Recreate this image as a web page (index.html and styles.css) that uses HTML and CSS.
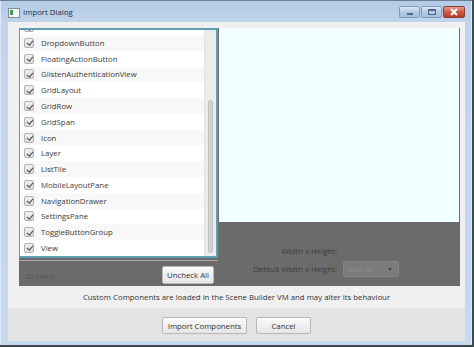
FILE: index.html
```html
<!DOCTYPE html>
<html>
<head>
<meta charset="utf-8">
<link rel="stylesheet" href="styles.css">
</head>
<body>
<div class="window">
  <div class="titlebar">
    <div class="app-icon"><span class="app-icon-green"></span></div>
    <div class="title">Import Dialog</div>
    <div class="caption-buttons">
      <div class="cap cap-min"><span class="min-glyph"></span></div>
      <div class="cap cap-max"><span class="max-glyph"></span></div>
      <div class="cap cap-close">
        <svg width="10" height="8" viewBox="0 0 10 8"><path d="M2 1 L8 7 M8 1 L2 7" stroke="#fff" stroke-width="2" fill="none"/></svg>
      </div>
    </div>
  </div>
  <div class="client">
    <div class="main">
      <div class="stage">
        <div class="left-col">
          <div class="list">
            <div class="rows">
              <div class="row"><span class="cb"></span><span class="label">DatePicker</span></div>
              <div class="row alt"><span class="cb"></span><span class="label">DropdownButton</span></div>
              <div class="row"><span class="cb"></span><span class="label">FloatingActionButton</span></div>
              <div class="row alt"><span class="cb"></span><span class="label">GlistenAuthenticationView</span></div>
              <div class="row"><span class="cb"></span><span class="label">GridLayout</span></div>
              <div class="row alt"><span class="cb"></span><span class="label">GridRow</span></div>
              <div class="row"><span class="cb"></span><span class="label">GridSpan</span></div>
              <div class="row alt"><span class="cb"></span><span class="label">Icon</span></div>
              <div class="row"><span class="cb"></span><span class="label">Layer</span></div>
              <div class="row alt"><span class="cb"></span><span class="label">ListTile</span></div>
              <div class="row"><span class="cb"></span><span class="label">MobileLayoutPane</span></div>
              <div class="row alt"><span class="cb"></span><span class="label">NavigationDrawer</span></div>
              <div class="row"><span class="cb"></span><span class="label">SettingsPane</span></div>
              <div class="row alt"><span class="cb"></span><span class="label">ToggleButtonGroup</span></div>
              <div class="row"><span class="cb"></span><span class="label">View</span></div>
            </div>
            <div class="scrollbar"><div class="thumb"></div></div>
          </div>
          <div class="list-footer">
            <span class="count">20 items</span>
            <span class="btn btn-uncheck">Uncheck All</span>
          </div>
        </div>
        <div class="right-col">
          <div class="preview"></div>
          <div class="props">
            <span class="prop-label">Width x Height:</span><span></span>
            <span class="prop-label">Default Width x Height:</span>
            <span class="combo"><span>Built-in</span><span class="arrow"></span></span>
          </div>
        </div>
      </div>
    </div>
    <div class="message">Custom Components are loaded in the Scene Builder VM and may alter its behaviour</div>
    <div class="footer">
      <span class="btn btn-import">Import Components</span>
      <span class="btn btn-cancel">Cancel</span>
    </div>
  </div>
</div>
</body>
</html>
```

FILE: styles.css
```css
html, body {
  margin: 0;
  padding: 0;
  background: #3e4a4e;
}
body {
  width: 474px;
  height: 347px;
  overflow: hidden;
  font-family: "Open Sans", "Noto Sans", sans-serif;
}
.window {
  width: 472px;
  height: 345px;
  box-sizing: border-box;
  background: linear-gradient(#b3cbe6 0px, #c0d4eb 22px, #c6d9ee 100%);
  border-top: 1px solid #6f7f92;
  padding: 0 7px 4px 8px;
  display: flex;
  flex-direction: column;
  box-shadow: inset 1px 0 0 #dde9f6, inset -1px 0 0 #dde9f6;
}
.titlebar {
  height: 21px;
  display: flex;
  align-items: center;
  position: relative;
}
.app-icon {
  width: 10px;
  height: 8px;
  background: #f4f6f8;
  border: 1px solid #7e8a96;
  margin-top: 2px;
  position: relative;
}
.app-icon-green {
  position: absolute;
  left: 1px;
  top: 1px;
  width: 3px;
  height: 5px;
  background: #3c9a5a;
}
.title {
  margin-left: 3px;
  margin-top: 1px;
  font-size: 7.8px;
  color: #1e2a3a;
}
.caption-buttons {
  margin-left: auto;
  display: flex;
  gap: 1px;
  margin-top: 1px;
}
.cap {
  height: 10px;
  border: 1px solid #7e9cc2;
  border-radius: 2px;
  display: flex;
  align-items: center;
  justify-content: center;
  box-sizing: content-box;
}
.cap-min, .cap-max {
  width: 19px;
  background: linear-gradient(#dde8f4, #b5cbe4 50%, #a7c0de);
}
.cap-close {
  width: 20px;
  border-color: #8f3a35;
  background: linear-gradient(#e39a8c, #cc5a47 50%, #b73a2a);
}
.min-glyph {
  width: 6px;
  height: 2px;
  background: #4f6685;
  margin-top: 4px;
}
.max-glyph {
  width: 6px;
  height: 3px;
  border: 1px solid #4f6685;
  border-top-width: 2px;
}
.client {
  flex: 1;
  background: #f0f0f0;
  display: flex;
  flex-direction: column;
}
.main {
  padding: 6px 5px 0 11px;
}
.stage {
  background: #6b6b6b;
  height: 258px;
  display: flex;
  gap: 1px;
}
.left-col {
  width: 199px;
  display: flex;
  flex-direction: column;
}
.list {
  height: 230px;
  box-sizing: border-box;
  border: 2px solid #5b9fb3;
  border-left-width: 1px;
  background: #fff;
  position: relative;
  overflow: hidden;
  display: flex;
}
.rows {
  flex: 1;
  margin-top: -10.7px;
}
.row {
  height: 15.77px;
  display: flex;
  align-items: center;
  background: #fff;
}
.row.alt {
  background: #f8f8f8;
}
.cb {
  width: 10px;
  height: 10px;
  box-sizing: border-box;
  margin-left: 4px;
  border: 1px solid #b2b2b2;
  border-radius: 2px;
  background: linear-gradient(#f0f0f0, #dcdcdc);
  position: relative;
}
.cb::after {
  content: "";
  position: absolute;
  left: 2.5px;
  top: 0.5px;
  width: 2.5px;
  height: 5px;
  border: solid #4a4a4a;
  border-width: 0 1.4px 1.4px 0;
  transform: rotate(40deg);
}
.label {
  margin-left: 7px;
  font-size: 7.8px;
  color: #3a3a3a;
}
.scrollbar {
  width: 12px;
  background: #ececec;
  border-left: 1px solid #e0e0e0;
  position: relative;
  padding-top: 70px;
  box-sizing: border-box;
}
.thumb {
  margin: 0 3px;
  height: 153px;
  border-radius: 4px;
  background: #d2d2d2;
  border: 1px solid #c2c2c2;
  box-sizing: border-box;
}
.list-footer {
  flex: 1;
  display: flex;
  align-items: flex-start;
  justify-content: space-between;
  padding: 5px 4px 0 6px;
  border-top: 1px solid #a8a8a8;
  margin-top: 2px;
}
.count {
  font-size: 7.5px;
  color: #555;
  margin-top: 5px;
}
.btn {
  display: inline-flex;
  align-items: center;
  justify-content: center;
  box-sizing: border-box;
  font-size: 7.8px;
  color: #333;
  border: 1px solid #b8b8b8;
  border-radius: 2px;
  background: linear-gradient(#fafafa, #e6e6e6);
}
.btn-uncheck {
  width: 52px;
  height: 18px;
}
.right-col {
  width: 240px;
  display: flex;
  flex-direction: column;
}
.preview {
  height: 194px;
  background: #f0ffff;
}
.props {
  display: grid;
  grid-template-columns: 118px 56px;
  column-gap: 6px;
  row-gap: 5px;
  align-items: center;
  padding-top: 24px;
}
.prop-label {
  text-align: right;
  font-size: 7.8px;
  color: #3c3c3c;
}
.combo {
  height: 16px;
  box-sizing: border-box;
  background: #7b7b7b;
  border: 1px solid #858585;
  border-radius: 2px;
  display: flex;
  align-items: center;
  justify-content: space-between;
  padding: 0 6px 0 4px;
  font-size: 7.5px;
  color: #8e8e8e;
}
.arrow {
  width: 0;
  height: 0;
  border-left: 2.5px solid transparent;
  border-right: 2.5px solid transparent;
  border-top: 3px solid #4a4a4a;
}
.message {
  height: 22px;
  display: flex;
  align-items: center;
  justify-content: center;
  font-size: 7.8px;
  color: #333;
  border-bottom: 1px solid #e6e6e6;
}
.footer {
  flex: 1;
  background: #e3e3e3;
  display: flex;
  justify-content: center;
  align-items: flex-start;
  padding-top: 8px;
  gap: 9px;
}
.btn-import {
  width: 85px;
  height: 17px;
}
.btn-cancel {
  width: 55px;
  height: 17px;
}
```
